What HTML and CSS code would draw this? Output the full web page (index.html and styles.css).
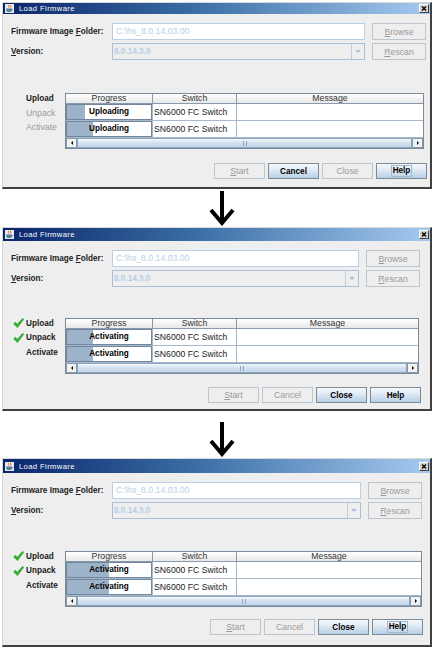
FILE: index.html
```html
<!DOCTYPE html>
<html>
<head>
<meta charset="utf-8">
<link rel="stylesheet" href="styles.css">
</head>
<body>
<div class="page">

  <!-- Dialog 1 -->
  <div class="dialog d1">
    <div class="titlebar">
      <svg class="ticon" viewBox="0 0 9 9"><rect x="0" y="0" width="9" height="9" fill="#e8e8f0"/><path d="M3 1 Q5 2 3.5 3.5 M5 0.8 Q6.8 2 5.2 3.6" stroke="#e76f00" stroke-width="0.9" fill="none"/><path d="M1.2 4.6 H7 V6 Q7 8 4.1 8 Q1.2 8 1.2 6 Z" fill="#5382a1"/><path d="M7 5 Q8.4 5.3 7 6.6" stroke="#5382a1" stroke-width="0.7" fill="none"/></svg>
      <span class="ttext">Load Firmware</span>
      <span class="tclose"><svg viewBox="0 0 7 7"><path d="M1.5 1.5 L5.5 5.5 M5.5 1.5 L1.5 5.5" stroke="#000" stroke-width="1.3"/></svg></span>
    </div>
    <div class="dbody">
      <div class="frow">
        <span class="flabel">Firmware Image <u>F</u>older:</span>
        <div class="field">C:\hs_8.0.14.03.00</div>
        <div class="btn dis side"><u>B</u>rowse</div>
      </div>
      <div class="frow">
        <span class="flabel"><u>V</u>ersion:</span>
        <div class="combo"><span class="ctext">8.0.14.3.0</span><span class="carrow"><span class="tri-down"></span></span></div>
        <div class="btn dis side"><u>R</u>escan</div>
      </div>
      <div class="prog">
        <div class="steps">
          <div class="step cur"><span class="chk"></span>Upload</div>
          <div class="step off"><span class="chk"></span>Unpack</div>
          <div class="step off"><span class="chk"></span>Activate</div>
        </div>
        <div class="tbl">
          <div class="tr thead"><div class="th">Progress</div><div class="th">Switch</div><div class="th last">Message</div></div>
          <div class="tr"><div class="td pc"><div class="pbar" style="--p:21%">Uploading</div></div><div class="td">SN6000 FC Switch</div><div class="td last"></div></div>
          <div class="tr"><div class="td pc"><div class="pbar" style="--p:31%">Uploading</div></div><div class="td">SN6000 FC Switch</div><div class="td last"></div></div>
          <div class="hs"><div class="sbtn"><span class="tri-left"></span></div><div class="thumb"><span class="grip"></span></div><div class="sbtn"><span class="tri-right"></span></div></div>
        </div>
      </div>
      <div class="brow">
        <div class="btn dis"><u>S</u>tart</div>
        <div class="btn en">Cancel</div>
        <div class="btn dis">Close</div>
        <div class="btn en"><span class="focus">Help</span></div>
      </div>
    </div>
  </div>

  <div class="arrow a1"><svg viewBox="0 0 26 35" width="26" height="35"><path d="M13 0 V32" stroke="#000" stroke-width="4"/><path d="M2 19 L13 32 L24 19" stroke="#000" stroke-width="4" fill="none"/></svg></div>

  <!-- Dialog 2 -->
  <div class="dialog d2">
    <div class="titlebar">
      <svg class="ticon" viewBox="0 0 9 9"><rect x="0" y="0" width="9" height="9" fill="#e8e8f0"/><path d="M3 1 Q5 2 3.5 3.5 M5 0.8 Q6.8 2 5.2 3.6" stroke="#e76f00" stroke-width="0.9" fill="none"/><path d="M1.2 4.6 H7 V6 Q7 8 4.1 8 Q1.2 8 1.2 6 Z" fill="#5382a1"/><path d="M7 5 Q8.4 5.3 7 6.6" stroke="#5382a1" stroke-width="0.7" fill="none"/></svg>
      <span class="ttext">Load Firmware</span>
      <span class="tclose"><svg viewBox="0 0 7 7"><path d="M1.5 1.5 L5.5 5.5 M5.5 1.5 L1.5 5.5" stroke="#000" stroke-width="1.3"/></svg></span>
    </div>
    <div class="dbody">
      <div class="frow">
        <span class="flabel">Firmware Image <u>F</u>older:</span>
        <div class="field">C:\hs_8.0.14.03.00</div>
        <div class="btn dis side"><u>B</u>rowse</div>
      </div>
      <div class="frow">
        <span class="flabel"><u>V</u>ersion:</span>
        <div class="combo"><span class="ctext">8.0.14.3.0</span><span class="carrow"><span class="tri-down"></span></span></div>
        <div class="btn dis side"><u>R</u>escan</div>
      </div>
      <div class="prog">
        <div class="steps">
          <div class="step cur"><span class="chk"><svg viewBox="0 0 12 11"><path d="M0.6 6.2 L2.6 4.6 L4.6 7 L10.5 0.4 L11.8 1.5 L4.8 10.6 Z" fill="#2db82d" stroke="#1c8a1c" stroke-width="0.5"/></svg></span>Upload</div>
          <div class="step cur"><span class="chk"><svg viewBox="0 0 12 11"><path d="M0.6 6.2 L2.6 4.6 L4.6 7 L10.5 0.4 L11.8 1.5 L4.8 10.6 Z" fill="#2db82d" stroke="#1c8a1c" stroke-width="0.5"/></svg></span>Unpack</div>
          <div class="step cur"><span class="chk"></span>Activate</div>
        </div>
        <div class="tbl">
          <div class="tr thead"><div class="th">Progress</div><div class="th">Switch</div><div class="th last">Message</div></div>
          <div class="tr"><div class="td pc"><div class="pbar" style="--p:31%">Activating</div></div><div class="td">SN6000 FC Switch</div><div class="td last"></div></div>
          <div class="tr"><div class="td pc"><div class="pbar" style="--p:31%">Activating</div></div><div class="td">SN6000 FC Switch</div><div class="td last"></div></div>
          <div class="hs"><div class="sbtn"><span class="tri-left"></span></div><div class="thumb"><span class="grip"></span></div><div class="sbtn"><span class="tri-right"></span></div></div>
        </div>
      </div>
      <div class="brow">
        <div class="btn dis"><u>S</u>tart</div>
        <div class="btn dis">Cancel</div>
        <div class="btn en">Close</div>
        <div class="btn en">Help</div>
      </div>
    </div>
  </div>

  <div class="arrow a2"><svg viewBox="0 0 26 35" width="26" height="35"><path d="M13 0 V32" stroke="#000" stroke-width="4"/><path d="M2 19 L13 32 L24 19" stroke="#000" stroke-width="4" fill="none"/></svg></div>

  <!-- Dialog 3 -->
  <div class="dialog d3">
    <div class="titlebar">
      <svg class="ticon" viewBox="0 0 9 9"><rect x="0" y="0" width="9" height="9" fill="#e8e8f0"/><path d="M3 1 Q5 2 3.5 3.5 M5 0.8 Q6.8 2 5.2 3.6" stroke="#e76f00" stroke-width="0.9" fill="none"/><path d="M1.2 4.6 H7 V6 Q7 8 4.1 8 Q1.2 8 1.2 6 Z" fill="#5382a1"/><path d="M7 5 Q8.4 5.3 7 6.6" stroke="#5382a1" stroke-width="0.7" fill="none"/></svg>
      <span class="ttext">Load Firmware</span>
      <span class="tclose"><svg viewBox="0 0 7 7"><path d="M1.5 1.5 L5.5 5.5 M5.5 1.5 L1.5 5.5" stroke="#000" stroke-width="1.3"/></svg></span>
    </div>
    <div class="dbody">
      <div class="frow">
        <span class="flabel">Firmware Image <u>F</u>older:</span>
        <div class="field">C:\hs_8.0.14.03.00</div>
        <div class="btn dis side"><u>B</u>rowse</div>
      </div>
      <div class="frow">
        <span class="flabel"><u>V</u>ersion:</span>
        <div class="combo"><span class="ctext">8.0.14.3.0</span><span class="carrow"><span class="tri-down"></span></span></div>
        <div class="btn dis side"><u>R</u>escan</div>
      </div>
      <div class="prog">
        <div class="steps">
          <div class="step cur"><span class="chk"><svg viewBox="0 0 12 11"><path d="M0.6 6.2 L2.6 4.6 L4.6 7 L10.5 0.4 L11.8 1.5 L4.8 10.6 Z" fill="#2db82d" stroke="#1c8a1c" stroke-width="0.5"/></svg></span>Upload</div>
          <div class="step cur"><span class="chk"><svg viewBox="0 0 12 11"><path d="M0.6 6.2 L2.6 4.6 L4.6 7 L10.5 0.4 L11.8 1.5 L4.8 10.6 Z" fill="#2db82d" stroke="#1c8a1c" stroke-width="0.5"/></svg></span>Unpack</div>
          <div class="step cur"><span class="chk"></span>Activate</div>
        </div>
        <div class="tbl">
          <div class="tr thead"><div class="th">Progress</div><div class="th">Switch</div><div class="th last">Message</div></div>
          <div class="tr"><div class="td pc"><div class="pbar" style="--p:50%">Activating</div></div><div class="td">SN6000 FC Switch</div><div class="td last"></div></div>
          <div class="tr"><div class="td pc"><div class="pbar" style="--p:50%">Activating</div></div><div class="td">SN6000 FC Switch</div><div class="td last"></div></div>
          <div class="hs"><div class="sbtn"><span class="tri-left"></span></div><div class="thumb"><span class="grip"></span></div><div class="sbtn"><span class="tri-right"></span></div></div>
        </div>
      </div>
      <div class="brow">
        <div class="btn dis"><u>S</u>tart</div>
        <div class="btn dis">Cancel</div>
        <div class="btn en">Close</div>
        <div class="btn en"><span class="focus">Help</span></div>
      </div>
    </div>
  </div>

</div>
</body>
</html>
```

FILE: styles.css
```css
* { box-sizing: border-box; }
html, body { margin: 0; padding: 0; }
body {
  width: 434px;
  height: 649px;
  overflow: hidden;
  background: #ffffff;
  font-family: "Liberation Sans", Arial, sans-serif;
  font-size: 8.7px;
  color: #222222;
}
.page { display: flex; flex-direction: column; }

.dialog {
  margin-left: 2px;
  width: 430px;
  background: #eeeeee;
  border-top: 1px solid #d8d8d8;
  border-left: 1px solid #d8d8d8;
  border-right: 2px solid #404040;
  border-bottom: 2px solid #404040;
  display: flex;
  flex-direction: column;
  overflow: hidden;
}
.d1 { margin-top: 2px; height: 187px; --th: 11px; --tm: 33px; --bm: 14px; --pr: 4px; --tr: 2px; }
.d2 { height: 184px; --th: 13px; --tm: 31px; --bm: 13px; --pr: 10px; --tr: 1px; }
.d3 { height: 189px; --th: 14px; --tm: 32px; --bm: 12px; --pr: 8px; --tr: 0px; }

.titlebar {
  height: var(--th);
  flex: none;
  background: linear-gradient(to right, #0a246a 0%, #3a6ea5 45%, #a6caf0 100%);
  display: flex;
  align-items: center;
  padding: 0 1px 0 2px;
}
.ticon { width: 9px; height: 9px; flex: none; }
.ttext {
  flex: 1;
  margin-left: 5px;
  color: #ffffff;
  font-size: 7.6px;
  font-weight: normal;
  letter-spacing: 0.4px;
  white-space: nowrap;
}
.tclose {
  width: 10px;
  height: 9px;
  flex: none;
  background: #d4d0c8;
  border: 1px solid;
  border-color: #ffffff #404040 #404040 #ffffff;
  display: flex;
}
.tclose svg { width: 8px; height: 7px; }

.dbody {
  flex: 1;
  display: flex;
  flex-direction: column;
  padding: 9px var(--pr) 0 8px;
}

.frow { display: flex; align-items: center; height: 17px; }
.frow + .frow { margin-top: 3px; }
.flabel {
  width: 101px;
  flex: none;
  font-weight: bold;
  font-size: 8.2px;
  color: #222222;
  white-space: nowrap;
}
.field {
  flex: 1;
  height: 17px;
  background: #ffffff;
  border: 1px solid #b8cfe5;
  color: #b8cfe5;
  padding-left: 3px;
  line-height: 15px;
  white-space: nowrap;
}
.combo {
  flex: 1;
  height: 17px;
  border: 1px solid #a9c0d8;
  background: #eeeeee;
  display: flex;
}
.ctext {
  flex: 1;
  color: #b8cfe5;
  font-weight: bold;
  font-size: 8.2px;
  line-height: 15px;
  padding-left: 1px;
  border-right: 1px solid #b8cfe5;
}
.carrow {
  width: 12px;
  display: flex;
  align-items: center;
  justify-content: center;
}
.tri-down {
  width: 0; height: 0;
  border-left: 3px solid transparent;
  border-right: 3px solid transparent;
  border-top: 3px solid #a6c0dc;
}

.btn {
  display: flex;
  align-items: center;
  justify-content: center;
  border: 1px solid;
  white-space: nowrap;
}
.side { width: 54px; height: 17px; margin-left: 7px; flex: none; }
.dis {
  border-color: #bcc6d0;
  background: #eeeeee;
  color: #9a9a9a;
}
.en {
  border-color: #7a8a99;
  background: linear-gradient(#f4f8fc 0%, #e4edf6 35%, #b8cfe5 100%);
  color: #000000;
  font-weight: bold;
  font-size: 8.2px;
}
.focus { outline: 1px solid #a3b8cc; padding: 0 1px; line-height: 10px; }

.prog { display: flex; margin-top: var(--tm); }
.steps {
  width: 54px;
  flex: none;
  display: flex;
  flex-direction: column;
  margin-top: -2px;
}
.step {
  height: 14.5px;
  display: flex;
  align-items: center;
  white-space: nowrap;
}
.chk { width: 15px; flex: none; display: flex; padding-left: 2px; }
.chk svg { width: 11px; height: 10px; }
.cur { font-weight: bold; font-size: 8.2px; color: #1a1a1a; }
.off { color: #9a9a9a; }

.tbl {
  flex: 1;
  margin-right: var(--tr);
  border: 1px solid #7a8a99;
  background: #ffffff;
  display: flex;
  flex-direction: column;
}
.tr { display: grid; grid-template-columns: 87px 84px 1fr; }
.th {
  height: 10px;
  line-height: 9px;
  text-align: center;
  color: #333333;
  background: linear-gradient(#ffffff, #e8e8e8);
  border-right: 1px solid #8a9aaa;
  border-bottom: 1px solid #8a9aaa;
}
.td {
  height: 17px;
  line-height: 16px;
  padding-left: 1px;
  border-right: 1px solid #a8b8c8;
  border-bottom: 1px solid #a8b8c8;
  white-space: nowrap;
  overflow: hidden;
  color: #222222;
}
.th.last, .td.last { border-right: none; }
.pc { padding: 0; }
.pbar {
  height: 16px;
  border: 1px solid #6f869e;
  background: linear-gradient(to right, #9db3c9 var(--p), #ffffff var(--p));
  font-weight: bold;
  font-size: 8.2px;
  color: #000000;
  text-align: center;
  line-height: 14px;
}

.hs { height: 10px; display: flex; }
.sbtn {
  width: 11px;
  flex: none;
  border: 1px solid #8a9aaa;
  background: #f2f2f2;
  display: flex;
  align-items: center;
  justify-content: center;
}
.tri-left {
  width: 0; height: 0;
  border-top: 2px solid transparent;
  border-bottom: 2px solid transparent;
  border-right: 2px solid #000;
}
.tri-right {
  width: 0; height: 0;
  border-top: 2px solid transparent;
  border-bottom: 2px solid transparent;
  border-left: 2px solid #000;
}
.thumb {
  flex: 1;
  border: 1px solid #8da6bf;
  background: linear-gradient(#f4f8fc 0%, #d7e4f1 40%, #c2d5e9 100%);
  display: flex;
  align-items: center;
  justify-content: center;
}
.grip {
  width: 4px;
  height: 5px;
  border-left: 1px solid #8da6bf;
  border-right: 1px solid #8da6bf;
}

.brow {
  display: flex;
  justify-content: flex-end;
  gap: 3px;
  margin-top: var(--bm);
  margin-right: -1px;
}
.brow .btn { width: 51px; height: 16px; }

.arrow { display: flex; padding-left: 209px; flex: none; }
.arrow svg { display: block; }
.a1 { height: 38px; padding-top: 2px; }
.a2 { height: 47px; padding-top: 11px; }
```
